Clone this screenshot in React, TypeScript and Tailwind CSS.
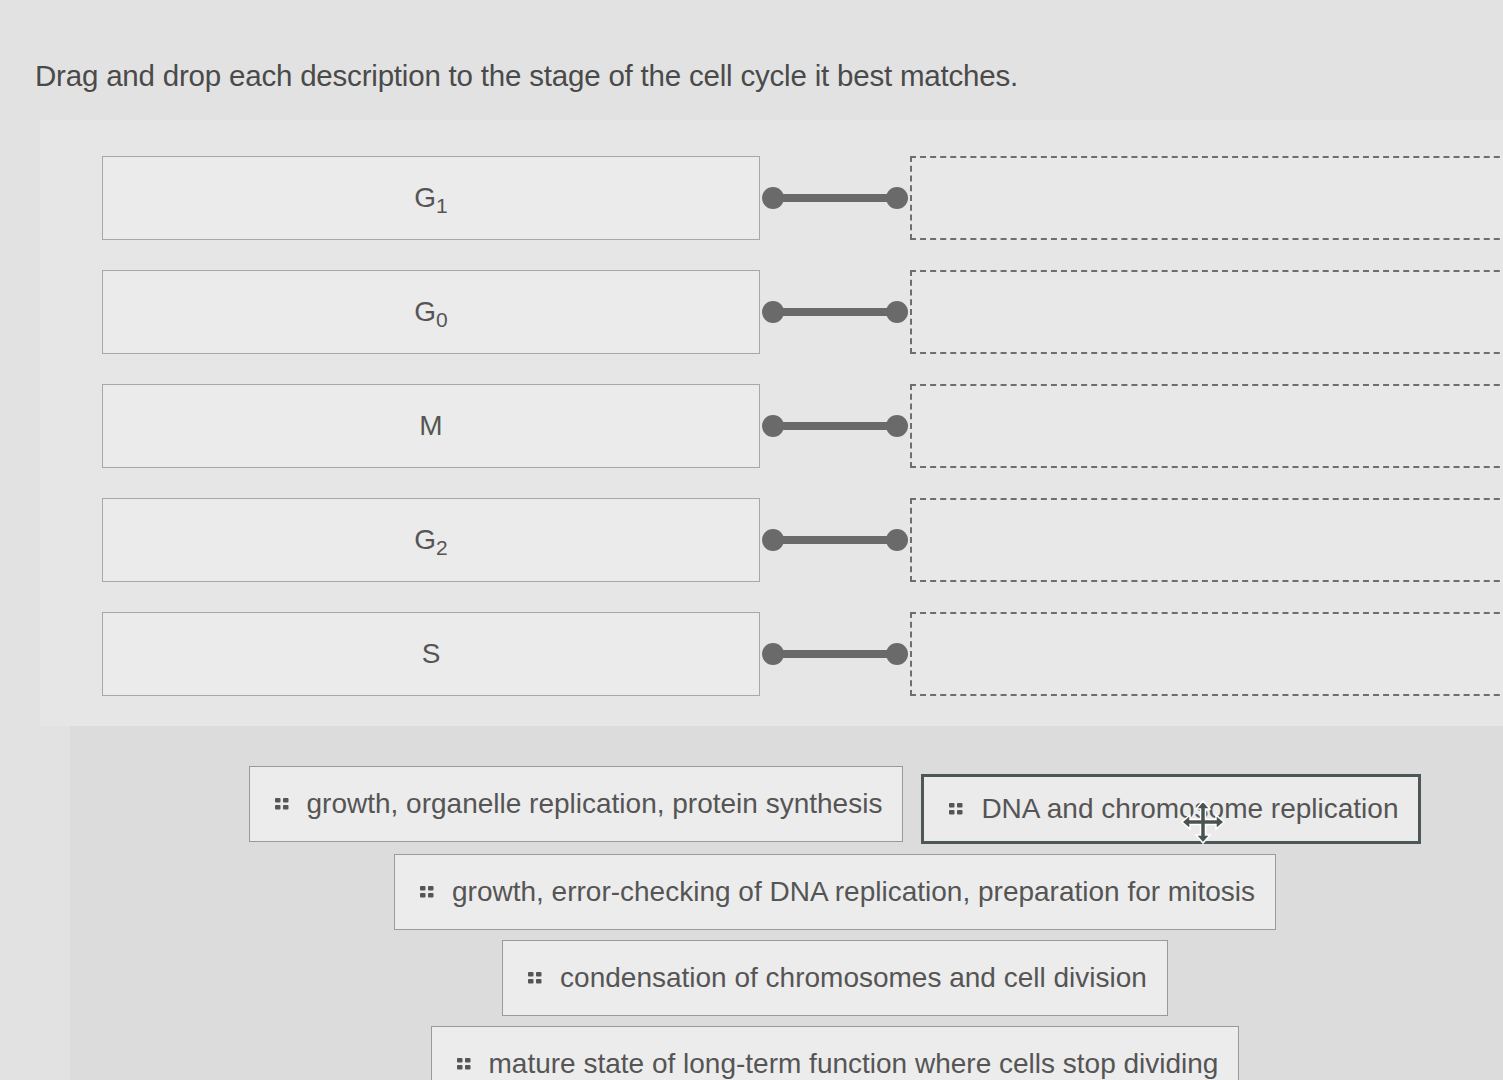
import React from 'react';

const stages = [
  { base: 'G', sub: '1' },
  { base: 'G', sub: '0' },
  { base: 'M', sub: '' },
  { base: 'G', sub: '2' },
  { base: 'S', sub: '' },
];

// drag handle: four little squares
function Grip() {
  return (
    <svg width="14" height="14" viewBox="0 0 14 14" className="shrink-0">
      <rect x="0" y="1" width="5.5" height="4.5" rx="1" fill="#555" />
      <rect x="8" y="1" width="5.5" height="4.5" rx="1" fill="#555" />
      <rect x="0" y="8" width="5.5" height="4.5" rx="1" fill="#555" />
      <rect x="8" y="8" width="5.5" height="4.5" rx="1" fill="#555" />
    </svg>
  );
}

function MoveCursor() {
  return (
    <svg width="46" height="46" viewBox="0 0 46 46" className="absolute left-[256px] top-[22px]">
      <g stroke="#fff" strokeWidth="1.5" fill="#4b5352">
        <path d="M23 2 L30 10 H25.5 V20.5 H36 V16 L44 23 L36 30 V25.5 H25.5 V36 H30 L23 44 L16 36 H20.5 V25.5 H10 V30 L2 23 L10 16 V20.5 H20.5 V10 H16 Z" />
      </g>
    </svg>
  );
}

function Chip({ text, active }: { text: string; active?: boolean }) {
  return (
    <div
      className={
        active
          ? 'relative flex items-center gap-[18px] h-[70px] mt-[8px] pl-[25px] pr-[20px] bg-[#ebebeb] border-[3px] border-[#4d5757]'
          : 'relative flex items-center gap-[18px] h-[76px] pl-[25px] pr-[20px] bg-[#ececec] border border-[#9a9a9a]'
      }
    >
      <Grip />
      <span className="text-[28px] text-[#555] whitespace-nowrap">{text}</span>
      {active && <MoveCursor />}
    </div>
  );
}

export default function App() {
  return (
    <div
      className="w-[1503px] h-[1080px] overflow-hidden bg-[#e2e2e2] pt-[56px]"
      style={{ fontFamily: '"Liberation Sans", Arial, sans-serif' }}
    >
      <h1 className="pl-[35px] text-[29.5px] text-[#4a4a4a] tracking-[-0.2px] leading-[40px]">
        Drag and drop each description to the stage of the cell cycle it best matches.
      </h1>

      <div className="mt-[24px] ml-[40px] bg-[#e6e6e6] pt-[36px] pb-[30px] overflow-hidden">
        <div className="flex flex-col gap-[30px]">
          {stages.map((s, i) => (
            <div key={i} className="flex items-center">
              <div className="shrink-0 ml-[62px] w-[658px] h-[84px] flex items-center justify-center bg-[#ebebeb] border border-[#a8a8a8]">
                <span className="text-[28px] text-[#555]">
                  {s.base}
                  {s.sub && <span className="text-[21px] relative top-[6px]">{s.sub}</span>}
                </span>
              </div>
              <div className="shrink-0 ml-[2px] flex items-center w-[146px]">
                <div className="w-[22px] h-[22px] rounded-full bg-[#6a6a6a]" />
                <div className="flex-1 h-[8px] -mx-[2px] bg-[#6a6a6a]" />
                <div className="w-[22px] h-[22px] rounded-full bg-[#6a6a6a]" />
              </div>
              <div className="shrink-0 ml-[2px] w-[620px] h-[84px] border-2 border-dashed border-r-0 border-[#6e6e6e] bg-[#e8e8e8]" />
            </div>
          ))}
        </div>
      </div>

      <div className="ml-[70px] h-[400px] bg-[#dcdcdc] pt-[40px]">
        <div className="flex flex-wrap justify-center gap-x-[18px] gap-y-[10px] w-[1360px] ml-[85px]">
          <Chip text="growth, organelle replication, protein synthesis" />
          <Chip text="DNA and chromosome replication" active />
          <Chip text="growth, error-checking of DNA replication, preparation for mitosis" />
          <Chip text="condensation of chromosomes and cell division" />
          <Chip text="mature state of long-term function where cells stop dividing" />
        </div>
      </div>
    </div>
  );
}
